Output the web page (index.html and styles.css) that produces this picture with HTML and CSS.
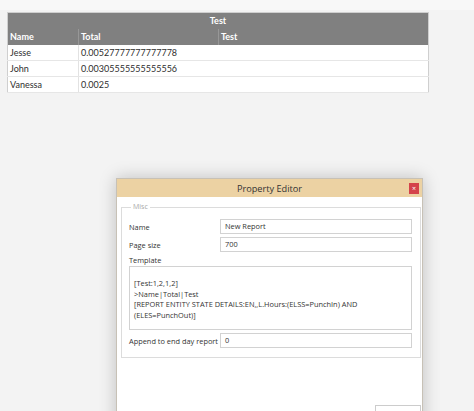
FILE: index.html
```html
<!DOCTYPE html>
<html>
<head>
<meta charset="utf-8">
<link rel="stylesheet" href="styles.css">
</head>
<body>
<div class="page">
  <table class="grid">
    <colgroup><col class="c1"><col class="c2"><col class="c3"></colgroup>
    <thead>
      <tr><th colspan="3" class="top">Test</th></tr>
      <tr><th>Name</th><th class="sep">Total</th><th class="sep">Test</th></tr>
    </thead>
    <tbody>
      <tr><td class="first">Jesse</td><td>0.00527777777777778</td><td></td></tr>
      <tr><td class="first">John</td><td>0.00305555555555556</td><td></td></tr>
      <tr><td class="first">Vanessa</td><td>0.0025</td><td></td></tr>
    </tbody>
  </table>
</div>

<div class="dialog">
  <div class="titlebar">
    <span></span>
    <span class="title">Property Editor</span>
    <span class="close">×</span>
  </div>
  <div class="dbody">
    <fieldset class="group">
      <legend>Misc</legend>
      <div class="form">
        <div class="label">Name</div>
        <div class="input">New Report</div>
        <div class="label">Page size</div>
        <div class="input">700</div>
        <div class="label wide tlabel">Template</div>
        <div class="textarea wide">
          <div class="line">&nbsp;</div>
          <div class="line">[Test:1,2,1,2]</div>
          <div class="line">&gt;Name|Total|Test</div>
          <div class="line">[REPORT ENTITY STATE DETAILS:EN,,L.Hours:(ELSS=PunchIn) AND</div>
          <div class="line">(ELES=PunchOut)]</div>
        </div>
        <div class="label">Append to end day report</div>
        <div class="input">0</div>
      </div>
    </fieldset>
    <div class="footer"><div class="btn"></div></div>
  </div>
</div>
</body>
</html>
```

FILE: styles.css
```css
html, body {
  margin: 0;
  padding: 0;
  height: 100%;
  overflow: hidden;
}
body {
  background: linear-gradient(#f8f8f8 0, #f8f8f8 10px, #f3f3f3 10px);
  font-family: Lato, "Open Sans", sans-serif;
  position: relative;
}
.page {
  padding: 12px 0 0 7px;
}
.grid {
  border-collapse: collapse;
  width: 421px;
  table-layout: fixed;
  background: #fff;
  border: 1px solid #cfcfcf;
  font-size: 9px;
}
.c1 { width: 71px; }
.c2 { width: 140px; }
.c3 { width: 210px; }
.grid th {
  background: #808080;
  color: #fff;
  font-weight: 700;
  text-align: left;
  height: 16px;
  padding: 0 0 0 2px;
  line-height: 16px;
}
.grid th.top {
  text-align: center;
  padding: 0;
}
.grid th.sep {
  border-left: 1px solid #979797;
}
.grid td {
  height: 15px;
  line-height: 15px;
  padding: 0 0 0 2px;
  color: #2e2e2e;
  border-bottom: 1px solid #e6e6e6;
  white-space: nowrap;
}
.grid td.first {
  border-right: 1px solid #e2e2e2;
}

.dialog {
  position: absolute;
  left: 116px;
  top: 178px;
  width: 305px;
  height: 260px;
  border: 1px solid #c7c1b6;
  background: #fff;
  box-shadow: 0 0 16px rgba(0,0,0,0.22);
  font-family: "Open Sans", sans-serif;
  color: #333;
}
.titlebar {
  height: 18px;
  background: #ecd2a3;
  display: grid;
  grid-template-columns: 1fr auto 1fr;
  align-items: center;
}
.title {
  font-size: 9.2px;
  color: #333;
}
.close {
  justify-self: end;
  width: 10px;
  height: 11px;
  margin-right: 3px;
  background: #d4434a;
  color: #fff;
  font-size: 7px;
  line-height: 11px;
  text-align: center;
}
.dbody {
  padding: 5px 1px 0 4px;
}
.group {
  margin: 0;
  border: 1px solid #dcdcdc;
  padding: 7px 8px 9px 7px;
  min-width: 0;
}
.group legend {
  font-size: 7px;
  line-height: 10px;
  color: #a9a9a9;
  padding: 0 2px;
  margin-left: 2px;
}
.form {
  display: grid;
  grid-template-columns: 91px 1fr;
  row-gap: 3px;
  font-size: 7.4px;
  align-items: center;
}
.label {
  color: #333;
}
.wide {
  grid-column: 1 / span 2;
}
.tlabel {
  line-height: 10px;
  margin-bottom: -2px;
}
.input {
  height: 13px;
  border: 1px solid #d2d2d2;
  padding-left: 4px;
  line-height: 13px;
  color: #333;
}
.textarea {
  height: 62px;
  border: 1px solid #d2d2d2;
  padding: 0 0 0 4px;
  line-height: 10.8px;
  color: #333;
}
.line {
  white-space: nowrap;
}
.footer {
  display: flex;
  justify-content: flex-end;
  padding-top: 47px;
}
.btn {
  width: 44px;
  height: 20px;
  border: 1px solid #cccccc;
  background: #fff;
}
```
